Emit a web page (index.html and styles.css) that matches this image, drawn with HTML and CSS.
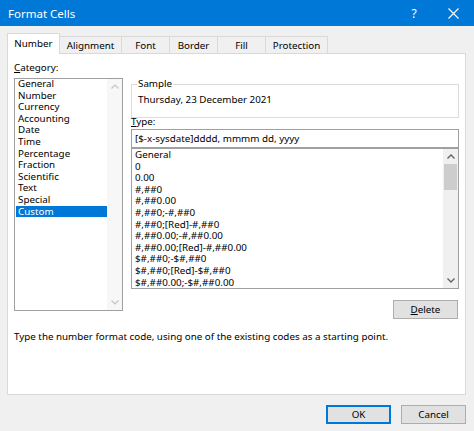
FILE: index.html
```html
<!DOCTYPE html>
<html>
<head>
<meta charset="utf-8">
<link rel="stylesheet" href="styles.css">
</head>
<body>
<div class="window">
  <div class="titlebar">
    <span class="title">Format Cells</span>
    <span class="help">?</span>
    <span class="close"><svg width="11" height="11" viewBox="0 0 11 11"><path d="M0.5 0.5L10.5 10.5M10.5 0.5L0.5 10.5" stroke="#fff" stroke-width="1.1" fill="none"/></svg></span>
  </div>
  <div class="tabs">
    <div class="tab active w53">Number</div>
    <div class="tab w62">Alignment</div>
    <div class="tab w48">Font</div>
    <div class="tab w48">Border</div>
    <div class="tab w48">Fill</div>
    <div class="tab w62">Protection</div>
  </div>
  <div class="panel">
    <div class="top">
      <div class="cat-col">
        <div class="label"><u>C</u>ategory:</div>
        <div class="listbox cat">
          <ul class="items">
            <li>General</li>
            <li>Number</li>
            <li>Currency</li>
            <li>Accounting</li>
            <li>Date</li>
            <li>Time</li>
            <li>Percentage</li>
            <li>Fraction</li>
            <li>Scientific</li>
            <li>Text</li>
            <li>Special</li>
            <li class="selected">Custom</li>
          </ul>
          <div class="vscroll disabled">
            <div class="arrow"><svg width="8" height="5" viewBox="0 0 8 5"><polyline points="0.5,4.5 4,1 7.5,4.5" fill="none" stroke="#c4c4c4" stroke-width="1.2"/></svg></div>
            <div class="track"></div>
            <div class="arrow"><svg width="8" height="5" viewBox="0 0 8 5"><polyline points="0.5,0.5 4,4 7.5,0.5" fill="none" stroke="#c4c4c4" stroke-width="1.2"/></svg></div>
          </div>
        </div>
      </div>
      <div class="right-col">
        <fieldset class="sample">
          <legend>Sample</legend>
          <div class="sample-text">Thursday, 23 December 2021</div>
        </fieldset>
        <div class="label type-label"><u>T</u>ype:</div>
        <div class="input">[$-x-sysdate]dddd, mmmm dd, yyyy</div>
        <div class="listbox codes">
          <ul class="items">
            <li>General</li>
            <li>0</li>
            <li>0.00</li>
            <li>#,##0</li>
            <li>#,##0.00</li>
            <li>#,##0;-#,##0</li>
            <li>#,##0;[Red]-#,##0</li>
            <li>#,##0.00;-#,##0.00</li>
            <li>#,##0.00;[Red]-#,##0.00</li>
            <li>$#,##0;-$#,##0</li>
            <li>$#,##0;[Red]-$#,##0</li>
            <li>$#,##0.00;-$#,##0.00</li>
          </ul>
          <div class="vscroll">
            <div class="arrow"><svg width="8" height="5" viewBox="0 0 8 5"><polyline points="0.5,4.5 4,1 7.5,4.5" fill="none" stroke="#606060" stroke-width="1.3"/></svg></div>
            <div class="track"><div class="thumb"></div></div>
            <div class="arrow"><svg width="8" height="5" viewBox="0 0 8 5"><polyline points="0.5,0.5 4,4 7.5,0.5" fill="none" stroke="#606060" stroke-width="1.3"/></svg></div>
          </div>
        </div>
        <div class="btn-row"><button class="btn"><u>D</u>elete</button></div>
      </div>
    </div>
    <p class="desc">Type the number format code, using one of the existing codes as a starting point.</p>
  </div>
  <div class="footer">
    <button class="btn default">OK</button>
    <button class="btn">Cancel</button>
  </div>
</div>
</body>
</html>
```

FILE: styles.css
```css
* { box-sizing: border-box; }
html, body { margin: 0; padding: 0; }
body {
  width: 474px;
  height: 431px;
  background: #f0f0f0;
  font-family: "Noto Sans", "Open Sans", sans-serif;
  font-size: 9.8px;
  color: #000;
  overflow: hidden;
}
.window { width: 474px; height: 431px; }

.titlebar {
  height: 26px;
  background: #0078d7;
  color: #fff;
  display: flex;
  align-items: center;
  padding-left: 8px;
}
.title { font-size: 11.5px; flex: 1; }
.help { font-size: 12px; width: 14px; text-align: center; margin-right: 27px; }
.close { display: flex; width: 11px; margin-right: 15px; }

.tabs {
  display: flex;
  align-items: flex-end;
  margin: 7px 0 0 7px;
  height: 20px;
}
.tab {
  height: 17px;
  border: 1px solid #d9d9d9;
  border-bottom: none;
  border-left: none;
  background: #f0f0f0;
  display: flex;
  align-items: center;
  justify-content: center;
  line-height: 12px;
  padding-top: 1px;
}
.tab.active {
  height: 21px;
  margin-bottom: -1px;
  background: #fff;
  border-left: 1px solid #d9d9d9;
  position: relative;
  z-index: 1;
  padding-top: 0;
}
.w53 { width: 53px; }
.w62 { width: 62px; }
.w48 { width: 48px; }

.panel {
  margin-left: 7px;
  width: 459px;
  height: 342px;
  background: #fff;
  border: 1px solid #d9d9d9;
  padding: 8px 6px 0 6px;
}
.top { display: flex; gap: 8px; }
.cat-col { width: 109px; }
.right-col { width: 328px; }

.label { line-height: 12px; height: 12px; }
u { text-decoration: underline; text-underline-offset: 1px; }

.listbox {
  display: flex;
  border: 1px solid #a0a0a0;
  background: #fff;
}
.listbox.cat { margin-top: 4px; height: 233px; padding-left: 1px; }
.listbox.cat .items { margin-top: -1px; }
.items {
  list-style: none;
  margin: 0;
  padding: 0;
  flex: 1;
}
.items li {
  line-height: 11.6px;
  height: 11.6px;
  white-space: nowrap;
  padding-left: 2px;
}
.items li.selected { background: #0078d7; color: #fff; }

.vscroll {
  width: 15px;
  display: flex;
  flex-direction: column;
  background: #f0f0f0;
}
.vscroll.disabled { background: #f7f7f7; }
.arrow {
  height: 15px;
  display: flex;
  align-items: center;
  justify-content: center;
}
.track { flex: 1; padding: 0 1px; }
.thumb { height: 26px; background: #cdcdcd; }

.sample {
  margin: 16px 0 0 0;
  padding: 0 6px 9px 6px;
  border: 1px solid #dcdcdc;
  height: 40px;
}
.sample legend {
  padding: 0 1px;
  line-height: 12px;
  margin-left: -1px;
}
.sample-text { line-height: 12px; padding-top: 4px; }

.type-label { margin-top: -2px; }
.input {
  margin-top: 1px;
  height: 19px;
  border: 1px solid #a0a0a0;
  line-height: 17px;
  padding-left: 3px;
  white-space: nowrap;
}
.listbox.codes { height: 141px; }
.listbox.codes .items { padding-left: 1px; }

.btn-row { display: flex; justify-content: flex-end; margin-top: 11px; padding-right: 1px; }
.btn {
  font-family: inherit;
  font-size: 9.8px;
  color: #000;
  width: 65px;
  height: 19px;
  background: #e1e1e1;
  border: 1px solid #adadad;
  padding: 0;
  line-height: 17px;
}
.btn.default { border: 1px solid #0078d7; box-shadow: inset 0 0 0 1px #0078d7; }

.desc { margin: 12px 0 0 0; line-height: 12px; }

.footer {
  display: flex;
  justify-content: flex-end;
  gap: 10px;
  margin-top: 10px;
  padding-right: 8px;
}
```
